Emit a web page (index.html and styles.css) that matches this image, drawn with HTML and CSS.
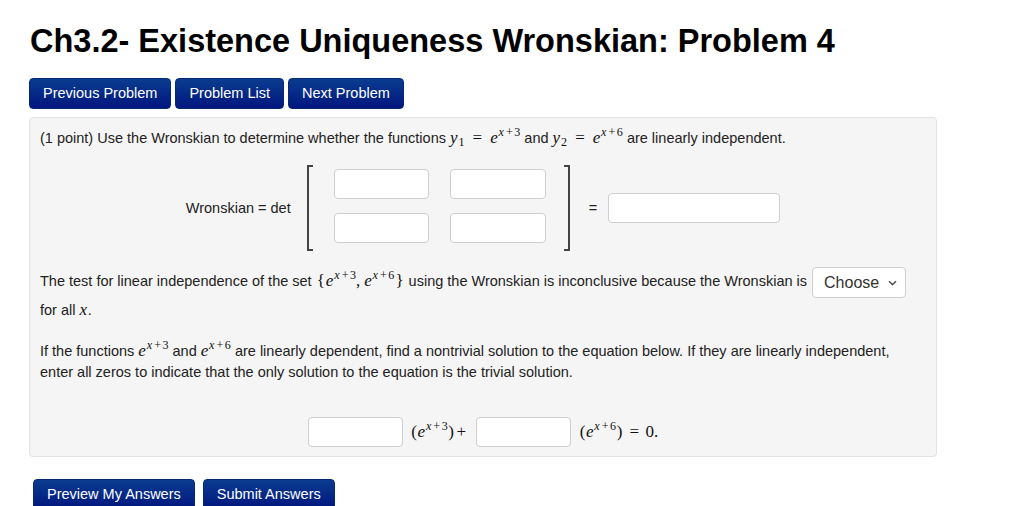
FILE: index.html
```html
<!DOCTYPE html>
<html>
<head>
<meta charset="utf-8">
<link rel="stylesheet" href="styles.css">
</head>
<body>
<div class="page">
  <h1 class="title">Ch3.2- Existence Uniqueness Wronskian: Problem 4</h1>
  <div class="nav">
    <button class="btn">Previous Problem</button>
    <button class="btn">Problem List</button>
    <button class="btn">Next Problem</button>
  </div>
  <div class="problem">
    <p class="p1">(1 point) Use the Wronskian to determine whether the functions <span class="m"><i class="y">y</i><sub>1</sub><span class="op">=</span><i class="e">e</i><sup><i class="x">x</i><span class="sp">+</span>3</sup></span> and <span class="m"><i class="y">y</i><sub>2</sub><span class="op">=</span><i class="e">e</i><sup><i class="x">x</i><span class="sp">+</span>6</sup></span> are linearly independent.</p>
    <div class="wrow">
      <span class="wlabel">Wronskian = det</span>
      <span class="br br-l"></span>
      <div class="matrix">
        <input class="cell" type="text">
        <input class="cell" type="text">
        <input class="cell" type="text">
        <input class="cell" type="text">
      </div>
      <span class="br br-r"></span>
      <span class="eq">=</span>
      <input class="ans" type="text">
    </div>
    <p class="p2">The test for linear independence of the set <span class="m"><span class="brace">{</span><i class="e">e</i><sup><i class="x">x</i><span class="sp">+</span>3</sup>,<span class="comma-sp"></span><i class="e">e</i><sup><i class="x">x</i><span class="sp">+</span>6</sup><span class="brace">}</span></span> using the Wronskian is inconclusive because the Wronskian is <span class="sel">Choose<svg class="chev" width="9" height="6" viewBox="0 0 9 6"><path d="M1 1.2 L4.5 4.6 L8 1.2" fill="none" stroke="#555" stroke-width="1.5"/></svg></span><br>for all <span class="m"><i class="x">x</i></span>.</p>
    <p class="p3">If the functions <span class="m"><i class="e">e</i><sup><i class="x">x</i><span class="sp">+</span>3</sup></span> and <span class="m"><i class="e">e</i><sup><i class="x">x</i><span class="sp">+</span>6</sup></span> are linearly dependent, find a nontrivial solution to the equation below. If they are linearly independent,<br>enter all zeros to indicate that the only solution to the equation is the trivial solution.</p>
    <div class="erow">
      <input class="cell" type="text">
      <span class="m term"><span class="par">(</span><i class="e">e</i><sup><i class="x">x</i><span class="sp">+</span>3</sup><span class="par">)</span><span class="pl">+</span></span>
      <input class="cell" type="text">
      <span class="m term"><span class="par">(</span><i class="e">e</i><sup><i class="x">x</i><span class="sp">+</span>6</sup><span class="par">)</span><span class="op">=</span>0.</span>
    </div>
  </div>
  <div class="actions">
    <button class="btn btn-lg">Preview My Answers</button>
    <button class="btn btn-lg">Submit Answers</button>
  </div>
</div>
</body>
</html>
```

FILE: styles.css
```css
html, body {
  margin: 0;
  padding: 0;
  background: #ffffff;
}
body {
  font-family: "Liberation Sans", Arial, sans-serif;
  font-size: 14.5px;
  color: #222;
  overflow: hidden;
}
.page {
  padding-left: 29px;
}
.title {
  margin: 23px 0 0 1px;
  font-size: 32.5px;
  line-height: 36px;
  font-weight: bold;
  color: #000;
}
.nav {
  display: flex;
  gap: 4px;
  margin-top: 19px;
}
.btn {
  height: 31px;
  padding: 0 13px;
  border: 1px solid #05296f;
  border-radius: 4px;
  background: linear-gradient(to bottom, #0a3c8f 0%, #00167f 100%);
  color: #fff;
  font-family: "Liberation Sans", Arial, sans-serif;
  font-size: 14.5px;
  line-height: 29px;
  cursor: pointer;
}
.problem {
  width: 886px;
  margin-top: 8px;
  padding: 10px 10px 9px 10px;
  background: #f5f5f5;
  border: 1px solid #e3e3e3;
  border-radius: 4px;
}
.problem p {
  margin: 0;
  line-height: 20px;
}
.m {
  font-family: "Liberation Serif", "Times New Roman", serif;
  font-size: 17px;
  color: #111;
}
.m sub, .m sup {
  font-size: 71%;
  line-height: 0;
}
.m sub {
  vertical-align: -0.22em;
  margin-left: 0.5px;
}
.m sup {
  vertical-align: 0.6em;
  margin-left: 0.5px;
}
.y {
  margin-right: 0.5px;
}
.e {
  margin-right: 0.3px;
}
.x {
  margin-right: 0.6px;
}
.sp {
  padding: 0 1.5px;
}
.pl {
  padding: 0 2px;
}
.par {
  padding: 0 0.6px;
}
.brace {
  padding: 0 1px;
}
.comma-sp {
  display: inline-block;
  width: 4px;
}
.op {
  padding: 0 6.5px;
}
.p1 .op {
  padding: 0 8px;
}
.wrow {
  display: flex;
  justify-content: center;
  align-items: center;
  margin-top: 17px;
  height: 86px;
}
.wlabel {
  margin-right: 16px;
}
.br {
  align-self: stretch;
  width: 4px;
  border-top: 2px solid #444;
  border-bottom: 2px solid #444;
}
.br-l {
  border-left: 2px solid #444;
}
.br-r {
  border-right: 2px solid #444;
}
.matrix {
  display: grid;
  grid-template-columns: 95px 96px;
  column-gap: 21px;
  row-gap: 14px;
  margin: 0 18px 0 21px;
  align-self: stretch;
  padding: 4px 0 8px;
}
input {
  box-sizing: border-box;
  height: 30px;
  border: 1px solid #cfcfcf;
  border-radius: 4px;
  background: #fff;
  margin: 0;
  padding: 0 6px;
}
.cell {
  width: 95px;
}
.matrix .cell {
  width: 100%;
}
.eq {
  margin: 0 11px 0 19px;
}
.ans {
  width: 172px;
}
.p2 {
  margin-top: 16px !important;
  line-height: 23px !important;
}
.sel {
  display: inline-flex;
  align-items: center;
  justify-content: space-between;
  box-sizing: border-box;
  width: 94px;
  height: 31px;
  padding: 0 8px 0 11px;
  margin-left: 1px;
  vertical-align: middle;
  background: #fff;
  border: 1px solid #cfcfcf;
  border-radius: 4px;
  font-size: 16px;
  color: #333;
}
.p3 {
  margin-top: 18px !important;
  line-height: 21px !important;
}
.erow {
  display: flex;
  justify-content: center;
  align-items: center;
  margin-top: 34px;
  gap: 8px;
}
.actions {
  display: flex;
  gap: 8px;
  margin: 22px 0 0 4px;
}
.btn-lg {
  padding: 0 13px;
}
```
